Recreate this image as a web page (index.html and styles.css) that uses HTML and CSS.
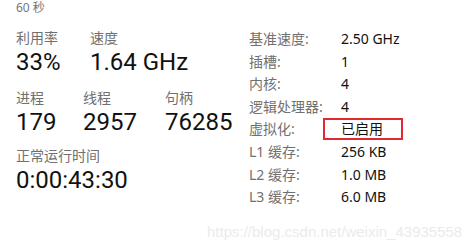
FILE: index.html
```html
<!DOCTYPE html>
<html lang="zh-CN">
<head>
<meta charset="utf-8">
<link rel="stylesheet" href="styles.css">
</head>
<body>
<div class="page">
  <div class="left">
    <div class="period">60 秒</div>
    <div class="stats row-a">
      <div class="stat w74"><div class="label">利用率</div><div class="value">33%</div></div>
      <div class="stat"><div class="label">速度</div><div class="value">1.64 GHz</div></div>
    </div>
    <div class="stats row-b">
      <div class="stat w67"><div class="label">进程</div><div class="value">179</div></div>
      <div class="stat w82"><div class="label">线程</div><div class="value">2957</div></div>
      <div class="stat"><div class="label">句柄</div><div class="value">76285</div></div>
    </div>
    <div class="stat uptime"><div class="label">正常运行时间</div><div class="value">0:00:43:30</div></div>
  </div>
  <div class="right">
    <div class="k">基准速度:</div><div class="v">2.50 GHz</div>
    <div class="k">插槽:</div><div class="v">1</div>
    <div class="k">内核:</div><div class="v">4</div>
    <div class="k">逻辑处理器:</div><div class="v">4</div>
    <div class="k">虚拟化:</div><div class="v"><span class="mark">已启用</span></div>
    <div class="k">L1 缓存:</div><div class="v">256 KB</div>
    <div class="k">L2 缓存:</div><div class="v">1.0 MB</div>
    <div class="k">L3 缓存:</div><div class="v">6.0 MB</div>
  </div>
  <div class="watermark">https://blog.csdn.net/weixin_43935558</div>
</div>
</body>
</html>
```
FILE: styles.css
```css
html, body {
  margin: 0;
  padding: 0;
  background: #ffffff;
}
body {
  font-family: "Segoe UI", "Noto Sans", "Noto Sans CJK SC", sans-serif;
  color: #111111;
}
.page {
  position: relative;
  width: 474px;
  height: 248px;
  display: flex;
  overflow: hidden;
}
.left {
  width: 233px;
  padding-left: 16px;
  display: flex;
  flex-direction: column;
}
.period {
  font-size: 12px;
  line-height: 16px;
  color: #777777;
}
.stats {
  display: flex;
}
.row-a { margin-top: 13px; }
.row-b { margin-top: 12px; }
.uptime { margin-top: 10px; }
.w74 { width: 74px; }
.w67 { width: 67px; }
.w82 { width: 82px; }
.label {
  font-size: 14px;
  line-height: 18px;
  color: #707070;
}
.value {
  font-family: Roboto, "Noto Sans", sans-serif;
  font-size: 24px;
  line-height: 30px;
  color: #111111;
}
.right {
  display: grid;
  grid-template-columns: 92px auto;
  grid-auto-rows: 22.6px;
  align-content: start;
  padding-top: 28px;
  font-size: 14px;
}
.k {
  color: #707070;
  line-height: 22.6px;
}
.v {
  color: #111111;
  line-height: 22.6px;
}
.mark {
  display: inline-block;
  box-sizing: border-box;
  width: 80px;
  height: 22px;
  margin-left: -18px;
  padding-left: 16px;
  border: 2px solid #e02a2f;
  line-height: 18px;
}
.watermark {
  position: absolute;
  left: 207px;
  top: 223px;
  font-family: "Liberation Sans", Arial, sans-serif;
  font-size: 15px;
  color: #ebebeb;
}
```
